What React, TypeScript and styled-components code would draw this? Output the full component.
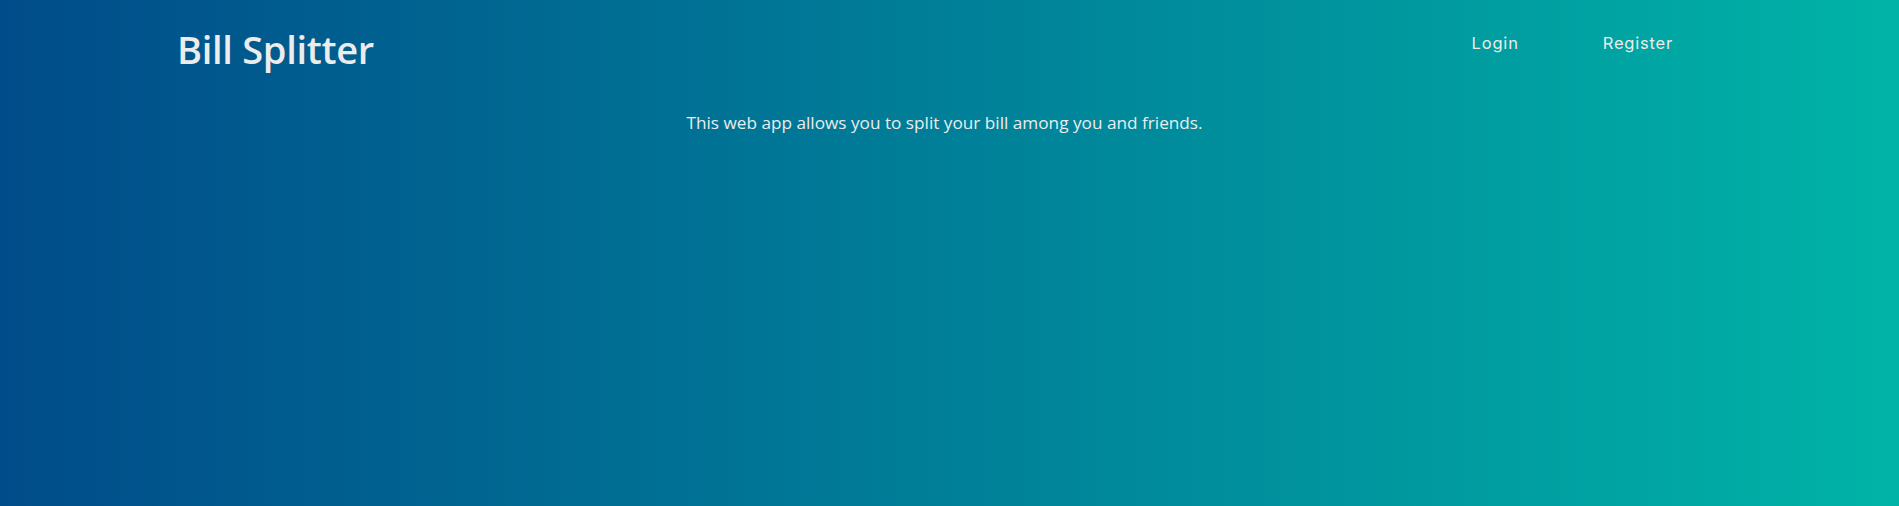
import React from 'react'
import styled, { createGlobalStyle } from 'styled-components'

const GlobalStyle = createGlobalStyle`
  html, body {
    margin: 0;
    padding: 0;
  }
  body {
    font-family: "Open Sans", "Noto Sans", sans-serif;
    color: #ececec;
  }
`

const Page = styled.div`
  width: 100%;
  height: 506px;
  background: linear-gradient(to right, #004c8a 0%, #00b3a7 100%);
  display: flex;
  flex-direction: column;
`

const Header = styled.header`
  display: flex;
  align-items: center;
  justify-content: space-between;
  padding: 22px 226px 0 177px;
  height: 54px;
`

const Brand = styled.h1`
  margin: 0;
  font-size: 38px;
  font-weight: 600;
  letter-spacing: -0.3px;
  color: #ececec;
`

const Nav = styled.nav`
  display: flex;
  gap: 84px;
  margin-bottom: 12px;
`

const NavLink = styled.a`
  font-family: Inter, "Noto Sans", sans-serif;
  font-size: 16.5px;
  font-weight: 400;
  letter-spacing: 0.8px;
  color: #ececec;
  text-decoration: none;
  cursor: pointer;
`

const Intro = styled.p`
  margin: 35px 0 0;
  padding-right: 10px;
  text-align: center;
  font-size: 17.2px;
  color: #ececec;
`

const App: React.FC = () => {
  return (
    <>
      <GlobalStyle />
      <Page>
        <Header>
          <Brand>Bill Splitter</Brand>
          <Nav>
            <NavLink>Login</NavLink>
            <NavLink>Register</NavLink>
          </Nav>
        </Header>
        <Intro>This web app allows you to split your bill among you and friends.</Intro>
      </Page>
    </>
  )
}

export default App
